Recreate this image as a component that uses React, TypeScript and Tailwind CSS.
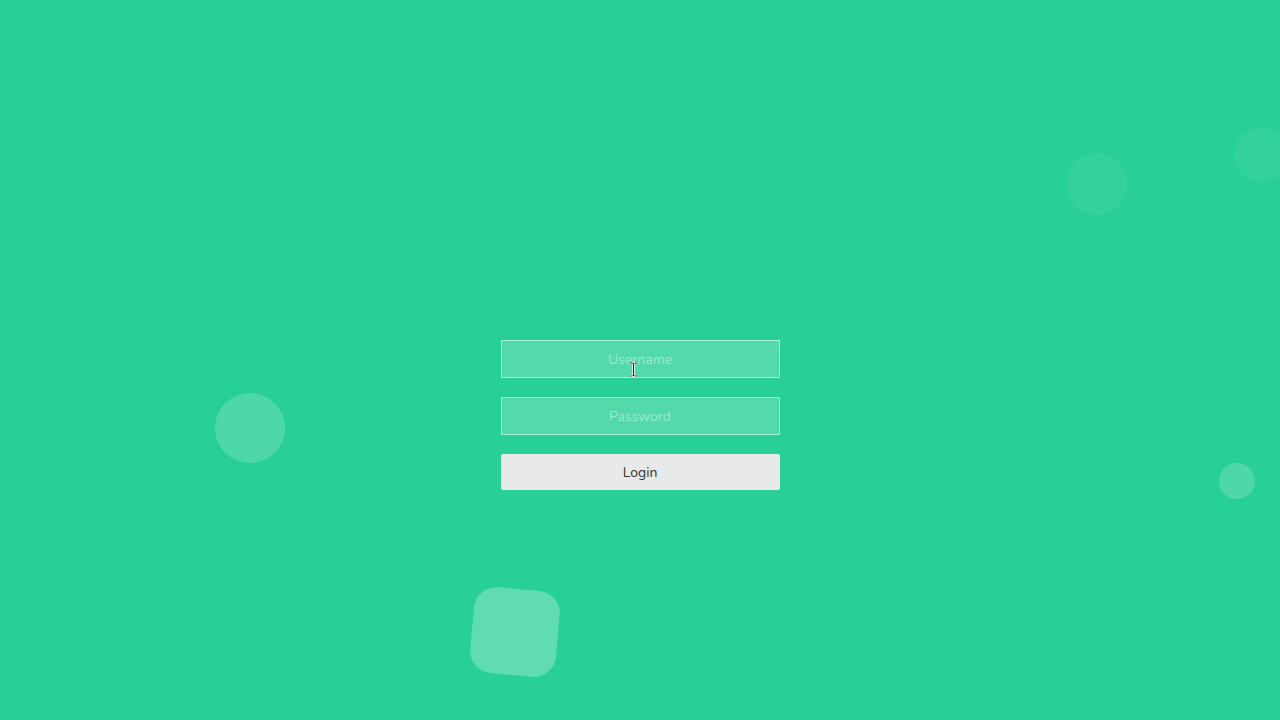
import React from 'react';

const App: React.FC = () => {
  return (
    <div
      className="relative w-full h-[720px] overflow-hidden bg-[#28d095]"
      style={{ fontFamily: '"Nunito", "Open Sans", "Liberation Sans", sans-serif' }}
    >
      {/* floating bubbles */}
      <div className="absolute left-[1066px] top-[153px] w-[62px] h-[62px] rounded-full bg-white/[0.06] blur-[1px]" />
      <div className="absolute left-[1234px] top-[128px] w-[56px] h-[54px] rounded-full bg-white/[0.06] blur-[1px]" />
      <div className="absolute left-[215px] top-[393px] w-[70px] h-[70px] rounded-full bg-white/[0.18]" />
      <div className="absolute left-[1219px] top-[463px] w-[36px] h-[36px] rounded-full bg-white/[0.18]" />
      <div className="absolute left-[472px] top-[589px] w-[86px] h-[86px] rounded-[22px] rotate-[5deg] bg-white/[0.26]" />

      <div className="relative flex flex-col items-center pt-[340px]">
        <form className="flex flex-col gap-[19px] w-[279px]" onSubmit={(e) => e.preventDefault()}>
          <input
            type="text"
            placeholder="Username"
            className="h-[38px] w-full border border-[#a6f2d5] bg-white/20 text-center text-[14px] text-white placeholder:text-white/45 outline-none"
          />
          <input
            type="password"
            placeholder="Password"
            className="h-[38px] w-full border border-[#a6f2d5] bg-white/20 text-center text-[14px] text-white placeholder:text-white/45 outline-none"
          />
          <button
            type="submit"
            className="h-[36px] w-full rounded-[2px] bg-[#e8e9e9] text-[14px] text-[#333]"
          >
            Login
          </button>
        </form>
      </div>

      {/* mouse cursor */}
      <svg className="absolute left-[629px] top-[362px]" width="9" height="15" viewBox="0 0 9 15">
        <path d="M1 1h2.5l1 1 1-1H8M4.5 2v11M1 14h2.5l1-1 1 1H8" fill="none" stroke="#fff" strokeWidth="2.5" />
        <path d="M1 1h2.5l1 1 1-1H8M4.5 2v11M1 14h2.5l1-1 1 1H8" fill="none" stroke="#222" strokeWidth="1" />
      </svg>
    </div>
  );
};

export default App;
